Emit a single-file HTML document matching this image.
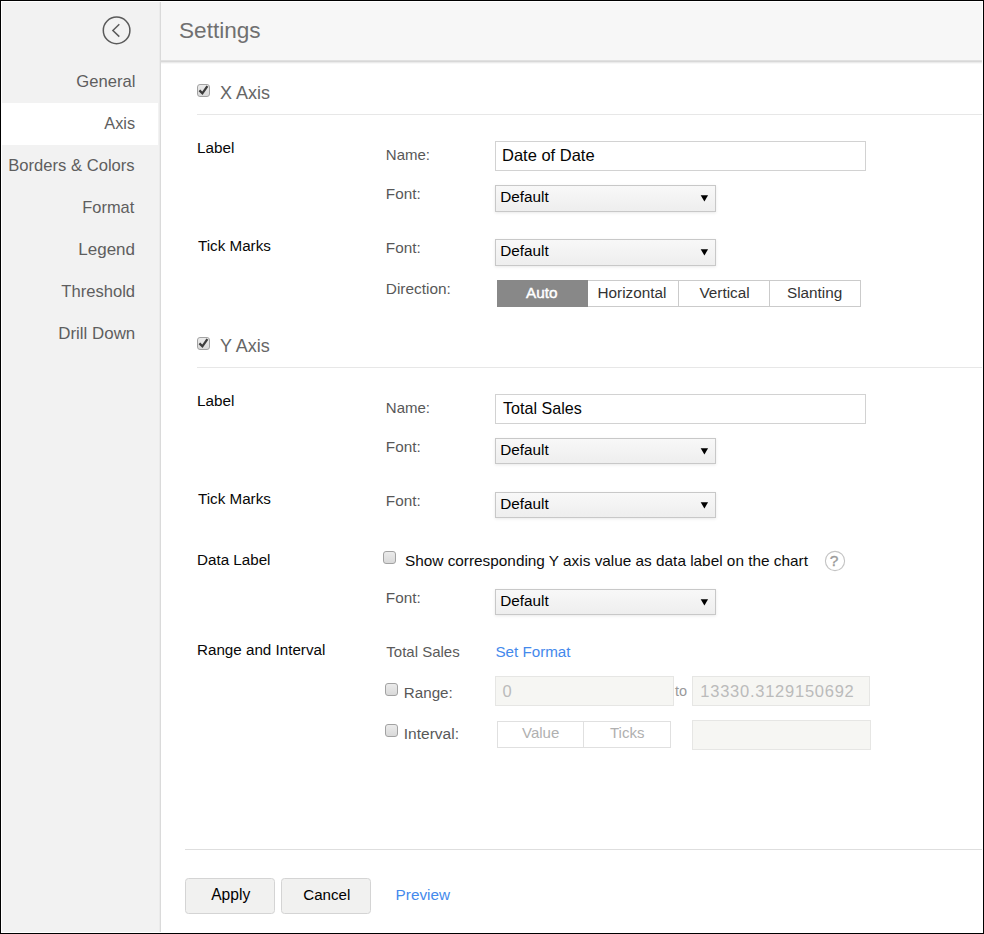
<!DOCTYPE html>
<html><head><meta charset="utf-8">
<style>
*{box-sizing:border-box;margin:0;padding:0}
html,body{width:984px;height:934px;overflow:hidden}
body{background:#000;position:relative;font-family:"Liberation Sans",sans-serif}
div,svg{position:absolute}
.t{white-space:nowrap;line-height:1}
.inp{border:1px solid #d2d2d2;background:#fff}
.dd{width:221px;height:27px;border:1px solid #c8c8c8;background:linear-gradient(#f8f8f8,#eeeeee);box-shadow:0 1px 3px rgba(0,0,0,.09)}

.cb{width:13px;height:13px;border:1px solid #a2a2a2;border-radius:3px;background:linear-gradient(#ebebeb,#d9d9d9)}
.hr{height:1px;background:#e7e7e7}
.dis{border:1px solid #e6e6e4;background:#f6f6f3}
.btn{height:36px;width:90px;border:1px solid #d4d4d4;border-radius:3.5px;background:#f1f1f0}
</style></head><body>
<div style="left:1px;top:1px;width:982px;height:932px;background:#fff"></div>
<!-- sidebar -->
<div style="left:2px;top:2px;width:157px;height:930px;background:#f2f2f2"></div>
<div style="left:159px;top:2px;width:1px;height:930px;background:#ebebeb"></div>
<div style="left:160px;top:2px;width:1px;height:930px;background:#dadada"></div>
<div style="left:2px;top:103px;width:156px;height:42px;background:#fff"></div>
<svg style="left:95px;top:10px" width="40" height="40" viewBox="95 10 40 40">
  <circle cx="116.6" cy="30.4" r="13.3" fill="none" stroke="#5a5a5a" stroke-width="1.5"/>
  <path d="M119.3 24.2 L112.9 30.5 L119.3 36.6" fill="none" stroke="#5a5a5a" stroke-width="1.5"/>
</svg>
<!-- header -->
<div style="left:161px;top:2px;width:821px;height:58px;background:#f7f7f7"></div>
<div style="left:161px;top:60px;width:821px;height:1px;background:#e0e0e0"></div>
<div style="left:161px;top:61px;width:821px;height:1px;background:#d8d8d8"></div>
<div style="left:161px;top:62px;width:821px;height:1px;background:#ebebeb"></div>
<div style="left:161px;top:63px;width:821px;height:1px;background:#f8f8f8"></div>

<!-- X axis -->
<div class="cb" style="left:197px;top:84px"></div>
<svg style="left:197px;top:84px" width="13" height="13" viewBox="197 84 13 13"><path d="M199.4 90.4 L202.4 93.3 L207.4 86.2" fill="none" stroke="#3c3c3c" stroke-width="2.3" stroke-linejoin="miter"/></svg>
<div class="hr" style="left:197px;top:114px;width:785px"></div>
<div class="inp" style="left:495px;top:141px;width:371px;height:30px"></div>
<div class="dd" style="left:495px;top:185px"></div>
<svg style="left:695px;top:185px" width="20" height="20" viewBox="0 0 20 20"><path d="M5.7 10.2 L13.1 10.2 L9.4 16.5 Z" fill="#000"/></svg>
<div class="dd" style="left:495px;top:239px"></div>
<svg style="left:695px;top:239px" width="20" height="20" viewBox="0 0 20 20"><path d="M5.7 10.2 L13.1 10.2 L9.4 16.5 Z" fill="#000"/></svg>
<div style="left:497px;top:280px;width:364px;height:27px;border:1px solid #cbcbcb;background:#fff"></div>
<div style="left:497px;top:280px;width:91px;height:27px;background:#888"></div>
<div style="left:678px;top:280px;width:1px;height:27px;background:#cbcbcb"></div>
<div style="left:769px;top:280px;width:1px;height:27px;background:#cbcbcb"></div>

<!-- Y axis -->
<div class="cb" style="left:197px;top:337px"></div>
<svg style="left:197px;top:337px" width="13" height="13" viewBox="197 84 13 13"><path d="M199.4 90.4 L202.4 93.3 L207.4 86.2" fill="none" stroke="#3c3c3c" stroke-width="2.3" stroke-linejoin="miter"/></svg>
<div class="hr" style="left:197px;top:367px;width:785px"></div>
<div class="inp" style="left:495px;top:394px;width:371px;height:30px"></div>
<div class="dd" style="left:495px;top:438px;height:26px"></div>
<svg style="left:695px;top:438px" width="20" height="20" viewBox="0 0 20 20"><path d="M5.7 10.2 L13.1 10.2 L9.4 16.5 Z" fill="#000"/></svg>
<div class="dd" style="left:495px;top:492px;height:26px"></div>
<svg style="left:695px;top:492px" width="20" height="20" viewBox="0 0 20 20"><path d="M5.7 10.2 L13.1 10.2 L9.4 16.5 Z" fill="#000"/></svg>
<div class="cb" style="left:383px;top:551px"></div>
<svg style="left:820px;top:546px" width="30" height="30" viewBox="820 546 30 30">
  <circle cx="835" cy="561" r="9.6" fill="none" stroke="#c4c4c4" stroke-width="1.1"/>
</svg>
<div class="dd" style="left:495px;top:589px;height:26px"></div>
<svg style="left:695px;top:589px" width="20" height="20" viewBox="0 0 20 20"><path d="M5.7 10.2 L13.1 10.2 L9.4 16.5 Z" fill="#000"/></svg>
<div class="cb" style="left:385px;top:683px"></div>
<div class="cb" style="left:385px;top:724px"></div>
<div class="dis" style="left:495px;top:676px;width:179px;height:30px"></div>
<div class="dis" style="left:692px;top:676px;width:178px;height:30px"></div>
<div style="left:497px;top:721px;width:174px;height:27px;border:1px solid #e0e0e0;background:#fff"></div>
<div style="left:583px;top:721px;width:1px;height:27px;background:#e0e0e0"></div>
<div class="dis" style="left:692px;top:720px;width:179px;height:30px"></div>

<!-- footer -->
<div class="hr" style="left:185px;top:849px;width:797px;background:#dedede"></div>
<div class="btn" style="left:185px;top:878px"></div>
<div class="btn" style="left:281px;top:878px"></div>

<div class='t' style='left:76.30000000000001px;top:74px;font-size:16.6px;color:#5e5e5e;font-weight:400;'>General</div>
<div class='t' style='left:104.30000000000001px;top:115px;font-size:16.3px;color:#5e5e5e;font-weight:400;'>Axis</div>
<div class='t' style='left:8.300000000000011px;top:158px;font-size:16.6px;color:#5e5e5e;font-weight:400;'>Borders &amp; Colors</div>
<div class='t' style='left:82.30000000000001px;top:199px;font-size:16.4px;color:#5e5e5e;font-weight:400;'>Format</div>
<div class='t' style='left:78.30000000000001px;top:241px;font-size:17.0px;color:#5e5e5e;font-weight:400;'>Legend</div>
<div class='t' style='left:61.30000000000001px;top:284px;font-size:16.6px;color:#5e5e5e;font-weight:400;'>Threshold</div>
<div class='t' style='left:58.30000000000001px;top:326px;font-size:16.9px;color:#5e5e5e;font-weight:400;'>Drill Down</div>
<div class='t' style='left:179px;top:20px;font-size:22.6px;color:#707070;font-weight:400;'>Settings</div>
<div class='t' style='left:220px;top:84px;font-size:18px;color:#666;font-weight:400;'>X Axis</div>
<div class='t' style='left:197px;top:140px;font-size:15.3px;color:#080808;font-weight:400;'>Label</div>
<div class='t' style='left:385.8px;top:147px;font-size:15px;color:#585858;font-weight:400;'>Name:</div>
<div class='t' style='left:502px;top:147px;font-size:16.5px;color:#050505;font-weight:400;'>Date of Date</div>
<div class='t' style='left:385.8px;top:186px;font-size:15.3px;color:#585858;font-weight:400;'>Font:</div>
<div class='t' style='left:500.3px;top:189px;font-size:15.3px;color:#000;font-weight:400;'>Default</div>
<div class='t' style='left:198px;top:238px;font-size:15.2px;color:#080808;font-weight:400;'>Tick Marks</div>
<div class='t' style='left:385.8px;top:240px;font-size:15.3px;color:#585858;font-weight:400;'>Font:</div>
<div class='t' style='left:500.3px;top:243px;font-size:15.3px;color:#000;font-weight:400;'>Default</div>
<div class='t' style='left:220px;top:337px;font-size:18px;color:#666;font-weight:400;'>Y Axis</div>
<div class='t' style='left:197px;top:393px;font-size:15.3px;color:#080808;font-weight:400;'>Label</div>
<div class='t' style='left:385.8px;top:400px;font-size:15px;color:#585858;font-weight:400;'>Name:</div>
<div class='t' style='left:503px;top:400px;font-size:16.1px;color:#050505;font-weight:400;'>Total Sales</div>
<div class='t' style='left:385.8px;top:439px;font-size:15.3px;color:#585858;font-weight:400;'>Font:</div>
<div class='t' style='left:500.3px;top:442px;font-size:15.3px;color:#000;font-weight:400;'>Default</div>
<div class='t' style='left:198px;top:491px;font-size:15.2px;color:#080808;font-weight:400;'>Tick Marks</div>
<div class='t' style='left:385.8px;top:493px;font-size:15.3px;color:#585858;font-weight:400;'>Font:</div>
<div class='t' style='left:500.3px;top:496px;font-size:15.3px;color:#000;font-weight:400;'>Default</div>
<div class='t' style='left:385.8px;top:281px;font-size:15.4px;color:#585858;font-weight:400;'>Direction:</div>
<div class='t' style='left:197px;top:552px;font-size:15.2px;color:#080808;font-weight:400;'>Data Label</div>
<div class='t' style='left:405px;top:553px;font-size:15.35px;color:#0c0c0c;font-weight:400;'>Show corresponding Y axis value as data label on the chart</div>
<div class='t' style='left:385.8px;top:590px;font-size:15.3px;color:#585858;font-weight:400;'>Font:</div>
<div class='t' style='left:500.3px;top:593px;font-size:15.3px;color:#000;font-weight:400;'>Default</div>
<div class='t' style='left:197px;top:642px;font-size:15.2px;color:#080808;font-weight:400;'>Range and Interval</div>
<div class='t' style='left:386.3px;top:644px;font-size:15px;color:#5a5a5a;font-weight:400;'>Total Sales</div>
<div class='t' style='left:495.4px;top:644px;font-size:15.2px;color:#4489ec;font-weight:400;'>Set Format</div>
<div class='t' style='left:403.8px;top:685px;font-size:15.2px;color:#585858;font-weight:400;'>Range:</div>
<div class='t' style='left:403.8px;top:726px;font-size:15.5px;color:#585858;font-weight:400;'>Interval:</div>
<div class='t' style='left:502.5px;top:683px;font-size:16.5px;color:#bbbbbb;font-weight:400;'>0</div>
<div class='t' style='left:675px;top:684px;font-size:14.5px;color:#999;font-weight:400;'>to</div>
<div class='t' style='left:700.3px;top:683px;font-size:16.5px;color:#bbbbbb;font-weight:400;letter-spacing:0.75px'>13330.3129150692</div>
<div class='t' style='left:526px;top:285px;font-size:15.3px;color:#fff;font-weight:400;-webkit-text-stroke:0.45px #fff'>Auto</div>
<div class='t' style='left:597.5px;top:285px;font-size:15.3px;color:#333;font-weight:400;'>Horizontal</div>
<div class='t' style='left:699.5px;top:285px;font-size:15.3px;color:#333;font-weight:400;'>Vertical</div>
<div class='t' style='left:787px;top:285px;font-size:15.3px;color:#333;font-weight:400;'>Slanting</div>
<div class='t' style='left:522px;top:725px;font-size:15px;color:#b0b0b0;font-weight:400;'>Value</div>
<div class='t' style='left:610px;top:725px;font-size:15px;color:#b0b0b0;font-weight:400;'>Ticks</div>
<div class='t' style='left:829.8px;top:553px;font-size:15.5px;color:#9a9a9a;font-weight:400;-webkit-text-stroke:0.35px #9a9a9a'>?</div>
<div class='t' style='left:211.2px;top:887px;font-size:15.6px;color:#000;font-weight:400;'>Apply</div>
<div class='t' style='left:303.3px;top:887px;font-size:15.1px;color:#000;font-weight:400;'>Cancel</div>
<div class='t' style='left:395.6px;top:887px;font-size:15.3px;color:#4489ec;font-weight:400;'>Preview</div>
</body></html>
